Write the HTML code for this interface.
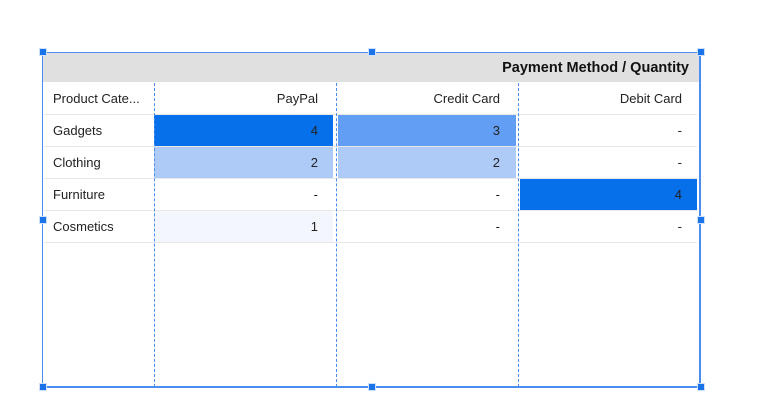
<!DOCTYPE html>
<html><head><style>
html,body{margin:0;padding:0;background:#fff;width:768px;height:417px;overflow:hidden;position:relative;font-family:"Liberation Sans",Arial,sans-serif;color:#222;}
.a{position:absolute;box-sizing:border-box;}
.c{position:absolute;box-sizing:border-box;height:31px;font-size:13px;line-height:32px;padding:0 18px 0 0;text-align:right;}
.l{text-align:left;padding:0 0 0 10px;}
.h{position:absolute;width:8px;height:8px;background:#1a73e8;border:1px solid #cfe0fb;box-sizing:border-box;}
.hl{position:absolute;height:1px;background:#e8e8e8;}
.d{position:absolute;width:0;border-left:1px dashed #4a8cf0;top:83px;height:304px;}
</style></head><body>
<div class="a" style="left:43px;top:53px;width:656px;height:29px;background:#e0e0e0;"></div>
<div class="a" style="left:43px;top:53px;width:646px;height:29px;line-height:30px;text-align:right;font-weight:bold;font-size:14.5px;color:#111;">Payment Method / Quantity</div>

<div class="a" style="left:154px;top:115px;width:179px;height:31px;background:#0670ea;"></div>
<div class="a" style="left:338px;top:115px;width:178px;height:31px;background:#639ef5;"></div>
<div class="a" style="left:154px;top:147px;width:179px;height:31px;background:#aecbf8;"></div>
<div class="a" style="left:338px;top:147px;width:178px;height:31px;background:#aecbf8;"></div>
<div class="a" style="left:520px;top:179px;width:177px;height:31px;background:#0670ea;"></div>
<div class="a" style="left:154px;top:211px;width:179px;height:31px;background:#f4f6fe;"></div>

<div class="hl" style="left:44px;top:114px;width:653px;"></div>
<div class="hl" style="left:44px;top:146px;width:653px;"></div>
<div class="hl" style="left:44px;top:178px;width:653px;"></div>
<div class="hl" style="left:44px;top:210px;width:653px;"></div>
<div class="hl" style="left:44px;top:242px;width:653px;"></div>

<div class="c l" style="left:43px;top:83px;width:112px;">Product Cate...</div>
<div class="c" style="left:155px;top:83px;width:181px;">PayPal</div>
<div class="c" style="left:337px;top:83px;width:181px;">Credit Card</div>
<div class="c" style="left:519px;top:83px;width:181px;">Debit Card</div>

<div class="c l" style="left:43px;top:115px;width:112px;">Gadgets</div>
<div class="c" style="left:155px;top:115px;width:181px;">4</div>
<div class="c" style="left:337px;top:115px;width:181px;">3</div>
<div class="c" style="left:519px;top:115px;width:181px;">-</div>

<div class="c l" style="left:43px;top:147px;width:112px;">Clothing</div>
<div class="c" style="left:155px;top:147px;width:181px;">2</div>
<div class="c" style="left:337px;top:147px;width:181px;">2</div>
<div class="c" style="left:519px;top:147px;width:181px;">-</div>

<div class="c l" style="left:43px;top:179px;width:112px;">Furniture</div>
<div class="c" style="left:155px;top:179px;width:181px;">-</div>
<div class="c" style="left:337px;top:179px;width:181px;">-</div>
<div class="c" style="left:519px;top:179px;width:181px;">4</div>

<div class="c l" style="left:43px;top:211px;width:112px;">Cosmetics</div>
<div class="c" style="left:155px;top:211px;width:181px;">1</div>
<div class="c" style="left:337px;top:211px;width:181px;">-</div>
<div class="c" style="left:519px;top:211px;width:181px;">-</div>

<div class="d" style="left:154px;"></div>
<div class="d" style="left:336px;"></div>
<div class="d" style="left:518px;"></div>

<div class="a" style="left:42px;top:52px;width:659px;height:336px;border:2px solid #4a8cf0;border-top-width:1px;border-left-width:1.5px;"></div>
<div class="h" style="left:39px;top:48px;"></div>
<div class="h" style="left:368px;top:48px;"></div>
<div class="h" style="left:697px;top:48px;"></div>
<div class="h" style="left:39px;top:216px;"></div>
<div class="h" style="left:697px;top:216px;"></div>
<div class="h" style="left:39px;top:383px;"></div>
<div class="h" style="left:368px;top:383px;"></div>
<div class="h" style="left:697px;top:383px;"></div>
</body></html>
